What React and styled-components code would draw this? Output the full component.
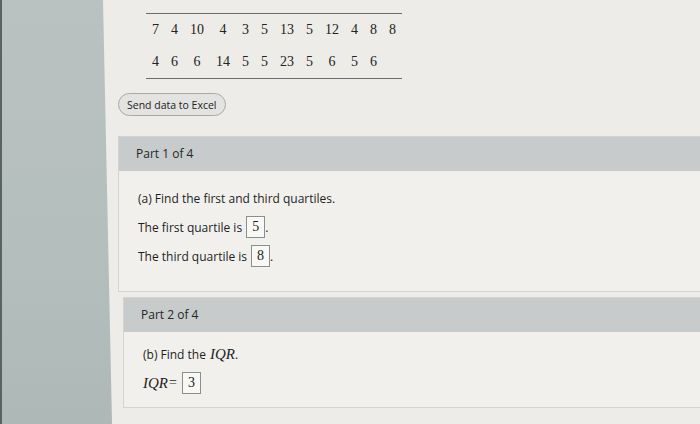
import React from 'react'
import styled, { createGlobalStyle } from 'styled-components'

const GlobalStyle = createGlobalStyle`
  html, body {
    margin: 0;
    padding: 0;
    background: #edece8;
    font-family: "Open Sans", "Liberation Sans", Arial, sans-serif;
    color: #1e1e1e;
  }
`

const Page = styled.div`
  display: flex;
  height: 424px;
  width: 700px;
  overflow: hidden;
`

const Sidebar = styled.div`
  width: 110px;
  flex-shrink: 0;
  border-left: 2px solid #5b6361;
  background: linear-gradient(180deg, #b9c2c0 0%, #b4bebc 60%, #aeb8b6 100%);
  clip-path: polygon(0 0, 103px 0, 112px 100%, 0 100%);
`

const Main = styled.div`
  flex: 1;
  padding-top: 13px;
  display: flex;
  flex-direction: column;
  align-items: flex-start;
`

const DataTable = styled.table`
  margin-left: 34px;
  border-collapse: collapse;
  border-top: 1px solid #6b6b6b;
  border-bottom: 1px solid #6b6b6b;
  font-family: "Liberation Serif", "Times New Roman", serif;
  font-size: 14px;
  color: #222;
`

const Cell = styled.td`
  height: 32px;
  padding: 0 6px;
  text-align: center;
`

const ExcelButton = styled.button`
  margin: 14px 0 0 6px;
  height: 23px;
  padding: 0 8px;
  border: 1px solid #a9a9a6;
  border-radius: 12px;
  background: #e3e3e1;
  font-family: "Open Sans", "Liberation Sans", Arial, sans-serif;
  font-size: 10.5px;
  color: #222;
`

const Panel = styled.section`
  align-self: stretch;
  margin: ${p => p.$top}px -20px 0 ${p => p.$indent}px;
  border: 1px solid #d3d3cf;
  background: #f1f0ec;
`

const PanelHeader = styled.div`
  height: 34px;
  line-height: 34px;
  padding-left: 17px;
  background: #c7cbcb;
  font-size: 12px;
  color: #262626;
`

const PanelBody = styled.div`
  display: flex;
  flex-direction: column;
  gap: ${p => p.$gap}px;
  padding: ${p => p.$padTop}px 0 ${p => p.$padBottom}px 19px;
  font-size: 12px;
`

const Line = styled.div`
  display: flex;
  align-items: center;
  min-height: 22px;
  white-space: nowrap;
`

const AnswerBox = styled.span`
  display: inline-flex;
  align-items: center;
  justify-content: center;
  height: 20px;
  min-width: 13px;
  padding: 0 2px;
  margin-left: 4px;
  border: 1px solid #8d8d8a;
  background: #f8f8f6;
  font-family: "Liberation Serif", "Times New Roman", serif;
  font-size: 14px;
  color: #222;
`

const MathVar = styled.span`
  font-family: "Liberation Serif", "Times New Roman", serif;
  font-style: italic;
  font-size: 15px;
  margin-left: ${p => (p.$lead ? 4 : 0)}px;
`

const Equals = styled.span`
  font-family: "Liberation Serif", "Times New Roman", serif;
  font-size: 14px;
  margin: 0 1px;
`

const rows = [
  ['7', '4', '10', '4', '3', '5', '13', '5', '12', '4', '8', '8'],
  ['4', '6', '6', '14', '5', '5', '23', '5', '6', '5', '6', ''],
]

export default function App() {
  return (
    <>
      <GlobalStyle />
      <Page>
        <Sidebar />
        <Main>
          <DataTable>
            <tbody>
              {rows.map((row, i) => (
                <tr key={i}>
                  {row.map((v, j) => (
                    <Cell key={j}>{v}</Cell>
                  ))}
                </tr>
              ))}
            </tbody>
          </DataTable>

          <ExcelButton>Send data to Excel</ExcelButton>

          <Panel $top={20} $indent={6}>
            <PanelHeader>Part 1 of 4</PanelHeader>
            <PanelBody $padTop={16} $padBottom={24} $gap={7}>
              <Line>(a) Find the first and third quartiles.</Line>
              <Line>
                The first quartile is <AnswerBox>5</AnswerBox>.
              </Line>
              <Line>
                The third quartile is <AnswerBox>8</AnswerBox>.
              </Line>
            </PanelBody>
          </Panel>

          <Panel $top={5} $indent={11}>
            <PanelHeader>Part 2 of 4</PanelHeader>
            <PanelBody $padTop={11} $padBottom={13} $gap={7}>
              <Line>
                (b) Find the<MathVar $lead>IQR</MathVar>.
              </Line>
              <Line>
                <MathVar>IQR</MathVar>
                <Equals>=</Equals>
                <AnswerBox>3</AnswerBox>
              </Line>
            </PanelBody>
          </Panel>
        </Main>
      </Page>
    </>
  )
}
